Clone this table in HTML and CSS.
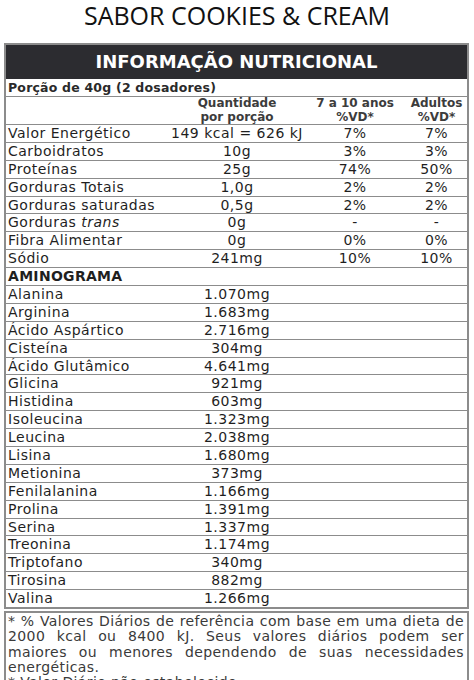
FILE: index.html
```html
<!DOCTYPE html>
<html lang="pt">
<head>
<meta charset="utf-8">
<link rel="stylesheet" href="styles.css">
</head>
<body>
<h1 class="title">SABOR COOKIES &amp; CREAM</h1>
<div class="table">
  <div class="head">INFORMAÇÃO NUTRICIONAL</div>
  <div class="portion">Porção de 40g (2 dosadores)</div>
  <div class="row colhead">
    <span></span>
    <span class="c">Quantidade<br>por porção</span>
    <span class="c">7 a 10 anos<br>%VD*</span>
    <span class="c">Adultos<br>%VD*</span>
  </div>
  <div class="row"><span>Valor Energético</span><span class="c">149 kcal = 626 kJ</span><span class="c">7%</span><span class="c">7%</span></div>
  <div class="row"><span>Carboidratos</span><span class="c">10g</span><span class="c">3%</span><span class="c">3%</span></div>
  <div class="row"><span>Proteínas</span><span class="c">25g</span><span class="c">74%</span><span class="c">50%</span></div>
  <div class="row"><span>Gorduras Totais</span><span class="c">1,0g</span><span class="c">2%</span><span class="c">2%</span></div>
  <div class="row"><span>Gorduras saturadas</span><span class="c">0,5g</span><span class="c">2%</span><span class="c">2%</span></div>
  <div class="row"><span>Gorduras <i>trans</i></span><span class="c">0g</span><span class="c">-</span><span class="c">-</span></div>
  <div class="row"><span>Fibra Alimentar</span><span class="c">0g</span><span class="c">0%</span><span class="c">0%</span></div>
  <div class="row"><span>Sódio</span><span class="c">241mg</span><span class="c">10%</span><span class="c">10%</span></div>
  <div class="row section"><span>AMINOGRAMA</span></div>
  <div class="row"><span>Alanina</span><span class="c">1.070mg</span></div>
  <div class="row"><span>Arginina</span><span class="c">1.683mg</span></div>
  <div class="row"><span>Ácido Aspártico</span><span class="c">2.716mg</span></div>
  <div class="row"><span>Cisteína</span><span class="c">304mg</span></div>
  <div class="row"><span>Ácido Glutâmico</span><span class="c">4.641mg</span></div>
  <div class="row"><span>Glicina</span><span class="c">921mg</span></div>
  <div class="row"><span>Histidina</span><span class="c">603mg</span></div>
  <div class="row"><span>Isoleucina</span><span class="c">1.323mg</span></div>
  <div class="row"><span>Leucina</span><span class="c">2.038mg</span></div>
  <div class="row"><span>Lisina</span><span class="c">1.680mg</span></div>
  <div class="row"><span>Metionina</span><span class="c">373mg</span></div>
  <div class="row"><span>Fenilalanina</span><span class="c">1.166mg</span></div>
  <div class="row"><span>Prolina</span><span class="c">1.391mg</span></div>
  <div class="row"><span>Serina</span><span class="c">1.337mg</span></div>
  <div class="row"><span>Treonina</span><span class="c">1.174mg</span></div>
  <div class="row"><span>Triptofano</span><span class="c">340mg</span></div>
  <div class="row"><span>Tirosina</span><span class="c">882mg</span></div>
  <div class="row last"><span>Valina</span><span class="c">1.266mg</span></div>
</div>
<div class="notes">
  <p>* % Valores Diários de referência com base em uma dieta de 2000 kcal ou 8400 kJ. Seus valores diários podem ser maiores ou menores dependendo de suas necessidades energéticas.</p>
  <p>* Valor Diário não estabelecido.</p>
</div>
</body>
</html>
```
FILE: styles.css
```css
html, body {
  margin: 0;
  padding: 0;
  background: #ffffff;
}
body {
  font-family: "DejaVu Sans", Verdana, sans-serif;
  color: #1f1f1f;
  overflow: hidden;
}
.title {
  margin: 0;
  height: 43px;
  padding-top: 1px;
  box-sizing: border-box;
  font-family: "Open Sans", "Liberation Sans", sans-serif;
  font-weight: 400;
  font-size: 25px;
  line-height: 28px;
  text-align: center;
  color: #111111;
}
.table {
  margin: 0 5px 0 4px;
  border: 2px solid #8c8c8c;
}
.head {
  height: 34px;
  background: #2c2c30;
  color: #ffffff;
  font-weight: 700;
  font-size: 18px;
  line-height: 34px;
  text-align: center;
}
.portion {
  height: 17px;
  border-bottom: 1px solid #8c8c8c;
  padding-left: 2px;
  font-weight: 700;
  font-size: 12.5px;
  line-height: 18px;
  letter-spacing: 0.2px;
  color: #2a2a2a;
}
.row {
  display: grid;
  grid-template-columns: 164px 134px 102px 61px;
  height: 16.9px;
  border-bottom: 1px solid #8c8c8c;
  font-size: 14px;
  line-height: 17px;
  letter-spacing: 0.5px;
  white-space: nowrap;
}
.row > span:first-child {
  padding-left: 2px;
}
.row.last {
  border-bottom: none;
}
.row .c {
  text-align: center;
}
.colhead {
  height: 27px;
  font-weight: 700;
  font-size: 12px;
  line-height: 13.5px;
  letter-spacing: 0;
  color: #3c3c3c;
}
.section {
  font-weight: 700;
  letter-spacing: 0.3px;
}
.notes {
  margin: 2px 5px 0 4px;
  border: 2px solid #8c8c8c;
  padding: 1px 3px 0 2px;
  font-size: 14px;
  line-height: 15.3px;
  letter-spacing: 0.4px;
  color: #3a3a3a;
  text-align: justify;
}
.notes p {
  margin: 0;
}
```
